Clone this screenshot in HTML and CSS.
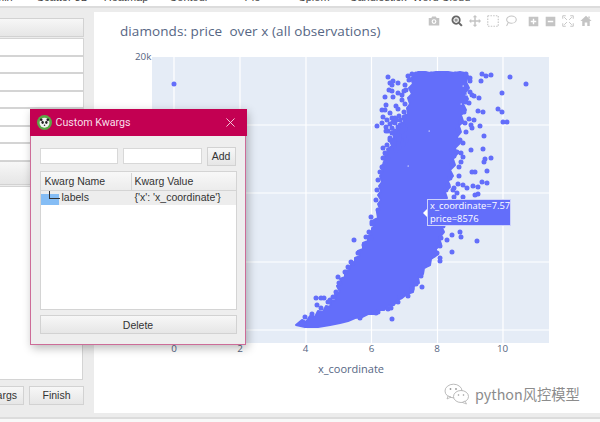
FILE: index.html
```
<!DOCTYPE html>
<html lang="en">
<head>
<meta charset="utf-8">
<title>Custom Kwargs</title>
<link rel="stylesheet" href="styles.css">
</head>
<body>
<div class="app">
  <nav class="menu">
    <span class="m1">Violin</span><span class="m2">Scatter 3D</span><span class="m3">Heatmap</span><span class="m4">Contour</span><span class="m5">Pie</span><span class="m6">Splom</span><span class="m7">Candlestick</span><span class="m8">Word Cloud</span>
  </nav>
  <main class="main">
    <aside class="side">
      <div class="btn side-top"></div>
      <div class="side-row"></div>
      <div class="side-row"></div>
      <div class="side-row"></div>
      <div class="side-row"></div>
      <div class="side-row"></div>
      <div class="side-row"></div>
      <div class="side-row"></div>
      <div class="btn side-mid"></div>
      <div class="side-panel"></div>
      <div class="side-actions">
        <div class="btn act-a">Kwargs</div>
        <div class="btn act-b">Finish</div>
      </div>
    </aside>
    <section class="plot">
      <h1 class="title">diamonds: price  over x (all observations)</h1>
      <div class="modebar">
        <svg class="mb" viewBox="0 0 16 16"><path fill="#c4c4c4" d="M1 4h3.5l1-2h5l1 2H15v10H1zM8 5.5a3.2 3.2 0 1 0 0 6.4 3.2 3.2 0 0 0 0-6.4zm0 1.6a1.6 1.6 0 1 1 0 3.2 1.6 1.6 0 0 1 0-3.2z" fill-rule="evenodd"/></svg>
        <svg class="mb mb-zoom" viewBox="0 0 16 16"><circle cx="6.8" cy="6.8" r="4.9" fill="none" stroke="#666" stroke-width="2.4"/><rect x="4.8" y="4.8" width="4" height="4" fill="#999"/><path d="M10.5 10.5l4 4" stroke="#666" stroke-width="2.8"/></svg>
        <svg class="mb mb-pan" viewBox="0 0 16 16"><path fill="#c4c4c4" d="M8 0l3 3H9v4h4V5l3 3-3 3V9H9v4h2l-3 3-3-3h2V9H3v2L0 8l3-3v2h4V3H5z"/></svg>
        <svg class="mb mb-box" viewBox="0 0 16 16"><rect x="1" y="1" width="14" height="14" fill="none" stroke="#c4c4c4" stroke-width="1.5" stroke-dasharray="2 1.6"/></svg>
        <svg class="mb mb-lasso" viewBox="0 0 16 16"><ellipse cx="8.6" cy="6.2" rx="6.4" ry="4.8" fill="none" stroke="#c4c4c4" stroke-width="1.4"/><path d="M4.4 10c-1 1.4-1 3 -2.4 4.5" fill="none" stroke="#c4c4c4" stroke-width="1.4"/></svg>
        <svg class="mb mb-plus" viewBox="0 0 16 16"><path fill="#c4c4c4" fill-rule="evenodd" d="M1 1h14v14H1zM7 4v3H4v2h3v3h2V9h3V7H9V4z"/></svg>
        <svg class="mb mb-minus" viewBox="0 0 16 16"><path fill="#c4c4c4" fill-rule="evenodd" d="M1 1h14v14H1zM4 7v2h8V7z"/></svg>
        <svg class="mb mb-auto" viewBox="0 0 16 16"><path fill="none" stroke="#c4c4c4" stroke-width="1.3" d="M1 5V1h4M11 1h4v4M15 11v4h-4M5 15H1v-4M3 3l3.5 3.5M13 3L9.500 6.500M13 13L9.500 9.500M3 13l3.500-3.500"/></svg>
        <svg class="mb mb-home" viewBox="0 0 16 16"><path fill="#c4c4c4" d="M8 1l7.500 7H13v6.500H9.700V10H6.300v4.500H3V8H.5zM11 2h2v3l-2-1.800z"/></svg>
      </div>
      <div class="chart">
        <svg class="chart-svg" viewBox="0 0 506 400" width="506" height="400">
          <rect class="bg" x="58" y="45" width="397" height="286"/>
          <path class="grid" d="M80 45V331M146 45V331M212 45V331M277.500 45V331M343.500 45V331M409 45V331M58 318H455M58 250H455M58 181H455M58 113H455"/>
          <g transform="translate(-94 -12)">
            <path class="blob" d="M296 325L302 320 306 322 310 316 315 317 318 311 323 312 326 306 330 307 331 301 336 300 335 294 340 292 337 286 342 284 340 279 345 277 345 271 349 270 351 265 355 264 355 258 360 256 358 251 363 249 363 243 368 241 368 236 372 234 372 228 375 226 374 220 378 218 377 212 380 209 378 204 381 200 378 195 381 191 379 186 382 182 380 176 383 172 381 167 385 162 383 157 388 154 387 149 392 146 390 141 394 138 393 132 398 130 399 124 404 122 403 116 408 114 407 108 410 104 408 98 412 94 409 88 413 84 411 78 415 75 418 72 425 72 430 73 436 72 442 72 448 72 454 73 460 72 465 73 468 76 466 82 469 88 465 93 468 99 463 104 466 110 461 115 463 121 459 126 461 132 457 137 460 143 455 148 457 154 453 159 455 165 450 170 453 176 448 181 450 187 445 192 447 198 443 204 442 215 441 226 444 232 439 238 441 244 436 249 437 255 431 259 430 265 424 268 423 274 418 277 419 283 414 286 413 292 407 294 402 298 397 300 394 305 388 306 384 310 378 310 374 314 368 314 362 317 355 318 348 321 340 323 330 325 318 327 305 327Z"/>
            <path class="pts" d="M408 76h0M412 74h0M416 74h0M421 74h0M426 74h0M431 74h0M437 75h0M443 74h0M449 75h0M455 74h0M461 75h0M466 74h0M470 78h0M386 127h0M390 124h0M395 123h0M400 120h0M404 118h0M392 128h0M398 127h0M403 126h0M386 131h0M392 133h0M397 134h0M402 131h0M405 129h0M390 140h0M394 143h0M399 139h0M404 136h0M406 140h0M399 147h0M403 144h0M396 150h0M388 158h0M385 163h0M409 80h0M406 90h0M405 104h0M404 112h0M399 116h0M396 120h0M380 172h0M378 180h0M377 190h0M376 200h0M378 210h0M372 222h0M369 232h0M364 245h0M358 253h0M351 262h0M345 272h0M339 283h0M336 292h0M330 300h0M321 308h0M312 314h0M464 94h0M470 92h0M466 102h0M464 112h0M461 122h0M458 130h0M460 140h0M454 156h0M452 165h0M450 178h0M446 190h0M444 200h0M443 210h0M443 226h0M441 238h0M440 246h0M434 255h0M428 264h0M421 276h0M416 284h0M408 296h0M398 302h0M388 309h0M376 313h0M360 318h0"/>
            <path class="specks" d="M429 131h.5M463 86h.5M466 95h.5M461 104h.5M444 222h.5M408 166h.5M443 241h.5"/>
          </g>
          <path class="pts" d="M80 72h0M294 65h0M299 69h0M296 71h0M298 73h0M304 71h0M311 73h0M295 78h0M298 79h0M304 81h0M310 79h0M308 83h0M291 85h0M299 85h0M308 88h0M292 93h0M288 98h0M291 98h0M302 94h0M304 97h0M296 101h0M289 105h0M298 106h0M301 106h0M293 108h0M288 111h0M283 114h0M299 110h0M294 119h0M301 119h0M296 126h0M289 136h0M293 133h0M291 141h0M289 146h0M288 155h0M388 62h0M392 64h0M397 63h0M387 69h0M416 65h0M432 72h0M408 81h0M378 83h0M380 84h0M385 86h0M376 69h0M375 91h0M384 99h0M389 100h0M404 97h0M408 100h0M409 110h0M413 110h0M375 107h0M380 108h0M371 111h0M377 113h0M378 116h0M386 114h0M372 120h0M390 124h0M369 131h0M377 138h0M389 137h0M363 140h0M367 141h0M369 145h0M391 147h0M397 146h0M390 150h0M367 150h0M365 155h0M393 159h0M378 160h0M381 160h0M365 164h0M388 170h0M393 171h0M364 172h0M369 173h0M379 174h0M384 175h0M373 176h0M360 176h0M354 173h0M359 178h0M363 181h0M369 185h0M381 183h0M384 182h0M360 185h0M366 220h0M367 225h0M383 229h0M358 223h0M353 228h0M358 240h0M346 246h0M346 249h0M343 241h0M330 254h0M328 275h0M318 277h0M313 280h0M306 285h0M298 307h0M297 296h0M284 300h0M277 205h0M278 212h0M272 225h0M277 226h0M260 228h0M258 251h0M244 265h0M222 286h0M227 286h0M230 286h0M223 293h0M211 305h0M254 255h0M239 285h0M234 290h0"/>
        </svg>
        <span class="tick y20">20k</span>
        <div class="xticks"><span class="x0">0</span><span class="x2">2</span><span class="x4">4</span><span class="x6">6</span><span class="x8">8</span><span class="x10">10</span></div>
        <div class="xlabel">x_coordinate</div>
        <div class="tooltip">x_coordinate=7.57<br>price=8576</div>
      </div>
      <div class="watermark">
        <svg class="wx" viewBox="0 0 26 22"><ellipse cx="9.500" cy="8" rx="8.500" ry="6.800" fill="#fff" stroke="#aaa" stroke-width=".8"/><path d="M4 13l-1 3 4-2z" fill="#fff" stroke="#aaa" stroke-width=".7"/><ellipse cx="17" cy="13.500" rx="7.500" ry="6" fill="#fff" stroke="#aaa" stroke-width=".8"/><path d="M21 18l1.500 3-4-1.500z" fill="#fff" stroke="#aaa" stroke-width=".7"/><circle cx="6.500" cy="6" r=".9" fill="#999"/><circle cx="12" cy="6" r=".9" fill="#999"/><circle cx="14.500" cy="12" r=".8" fill="#999"/><circle cx="19.500" cy="12" r=".8" fill="#999"/></svg>
        <span class="wm-text">python风控模型</span>
      </div>
    </section>
  </main>
  <div class="footer"></div>
</div>

<div class="dialog">
  <header class="dlg-title">
    <svg class="dlg-logo" viewBox="0 0 16 16"><circle cx="8" cy="8" r="8" fill="#5aa846"/><circle cx="8" cy="8.300" r="5.300" fill="#f4f4f4"/><circle cx="4.500" cy="5" r="1.400" fill="#222"/><circle cx="11.500" cy="5" r="1.400" fill="#222"/><ellipse cx="6" cy="8" rx="1.300" ry="1.500" fill="#222"/><ellipse cx="10" cy="8" rx="1.300" ry="1.500" fill="#222"/><circle cx="8" cy="10.800" r=".8" fill="#222"/></svg>
    <span class="dlg-name">Custom Kwargs</span>
    <svg class="dlg-close" viewBox="0 0 10 10"><path d="M.5.500l9 9M9.500.500l-9 9" stroke="#f6dce6" stroke-width="1"/></svg>
  </header>
  <div class="dlg-body">
    <div class="dlg-form">
      <div class="field"></div>
      <div class="field"></div>
      <div class="btn add">Add</div>
    </div>
    <div class="tree">
      <div class="tree-head"><span class="col1">Kwarg Name</span><span class="col2">Kwarg Value</span></div>
      <div class="tree-row">
        <span class="tree-cell1"><span class="branch"></span><span class="tree-name">labels</span></span>
        <span class="tree-cell2">{'x': 'x_coordinate'}</span>
      </div>
    </div>
    <div class="btn del">Delete</div>
  </div>
</div>
</body>
</html>
```
FILE: styles.css
```
* { box-sizing: border-box; }
html, body { margin: 0; padding: 0; }
body {
  width: 600px; height: 422px; overflow: hidden; position: relative;
  background: #fff; color: #333;
  font-family: "Liberation Sans", Arial, sans-serif;
}
.app { width: 600px; height: 422px; display: flex; flex-direction: column; }

.menu {
  height: 6px; flex: none; overflow: hidden; background: #fff;
  display: flex; align-items: flex-end; font-size: 11px; color: #444; white-space: nowrap;
  padding-bottom: 2px; line-height: 14px;
}
.m1 { margin-left: -14px; }
.m2 { margin-left: 24px; }
.m3 { margin-left: 15px; }
.m4 { margin-left: 21px; }
.m5 { margin-left: 36px; }
.m6 { margin-left: 38px; }
.m7 { margin-left: 20px; }
.m8 { margin-left: 6px; }

.main {
  flex: none; height: 411px; background: #ececec; border-top: 2px solid #dcdcdc;
  display: flex; gap: 10px; padding: 4px 0 4px 0;
}
.side { width: 84px; flex: none; display: flex; flex-direction: column; padding-top: 6px; }
.btn {
  background: linear-gradient(#f7f7f7, #e6e6e6);
  border: 1px solid #d2d2d2; font-size: 10.500px; color: #333;
  display: flex; align-items: center; justify-content: center;
}
.side-top { height: 19px; border-left: 0; }
.side-row { height: 17.500px; background: #fff; border: 1px solid #d4d4d4; border-left: 0; }
.side-top + .side-row { margin-top: 1px; }
.side-mid { height: 24px; border-left: 0; }
.side-panel { height: 194px; margin-top: 1px; background: #fff; border: 1px solid #d4d4d4; border-left: 0; width: 83px; }
.side-actions { display: flex; gap: 5px; margin-top: 6px; height: 19px; }
.act-a { width: 24px; border-left: 0; justify-content: flex-end; overflow: hidden; padding-right: 6px; white-space: nowrap; }
.act-b { width: 55px; }

.plot { position: relative; width: 506px; height: 401px; background: #fff; flex: none; }
.title {
  position: absolute; left: 26px; top: 10px; margin: 0; font: 400 13.500px/18px "Open Sans", sans-serif;
  color: #566684; white-space: pre; letter-spacing: .08px;
}
.modebar { position: absolute; left: 334px; top: 3px; display: flex; align-items: center; height: 12px; }
.mb { width: 12px; height: 12px; flex: none; }
.mb-zoom { margin-left: 11px; }
.mb-pan { margin-left: 6px; }
.mb-box { margin-left: 6px; }
.mb-lasso { margin-left: 6px; }
.mb-plus { margin-left: 11px; width: 11px; height: 11px; }
.mb-minus { margin-left: 6px; width: 11px; height: 11px; }
.mb-auto { margin-left: 6px; }
.mb-home { margin-left: 6px; }

.chart { position: absolute; inset: 0; }
.chart-svg { display: block; }
.bg { fill: #e5ecf6; }
.grid { stroke: #fff; stroke-width: 1.200; fill: none; }
.blob { fill: #636efa; stroke: #636efa; stroke-width: 2; stroke-linejoin: round; }
.pts { fill: none; stroke: #636efa; stroke-width: 5; stroke-linecap: round; }
.specks { fill: none; stroke: #dfe4fb; stroke-width: 1.200; stroke-linecap: round; }
.tick, .xticks { font: 400 9.800px/12px "Open Sans", sans-serif; color: #56647f; }
.tick { position: absolute; }
.y20 { left: 41px; top: 39px; }
.xticks { position: absolute; left: 0; top: 331px; width: 506px; height: 12px; }
.xticks span { position: absolute; transform: translateX(-50%); }
.x0 { left: 80px; } .x2 { left: 146px; } .x4 { left: 211.500px; } .x6 { left: 277.500px; } .x8 { left: 343px; } .x10 { left: 408.500px; }
.xlabel {
  position: absolute; left: 224px; top: 350px; font: 400 11px/14px "Open Sans", sans-serif; color: #566684;
}
.tooltip {
  position: absolute; left: 333px; top: 187px; width: 84px; height: 27px; background: #636efa;
  border: 1px solid #cdd2fb; color: #fff; font: 400 9.400px/12.500px "Open Sans", sans-serif; padding: 0 0 0 2px; white-space: nowrap;
}
.tooltip::before {
  content: ""; position: absolute; left: -5px; top: 9px; width: 0; height: 0;
  border: 4px solid transparent; border-left: 0; border-right: 4px solid #fff; 
}
.watermark { position: absolute; left: 350px; top: 369px; display: flex; align-items: center; gap: 5px; height: 26px; }
.wx { width: 26px; height: 22px; flex: none; }
.wm-text { font: 400 14.300px/20px "Noto Sans CJK SC", "Noto Sans", sans-serif; color: #8c8c8c; white-space: nowrap; }

.footer { flex: 1; border-top: 2px solid #dcdcdc; background: #f8f8f8; }

.dialog {
  position: absolute; left: 30px; top: 109px; width: 216px; height: 236px;
  border: 1.500px solid #cd6c98; border-top: 0; background: #eee;
  box-shadow: 2px 3px 9px rgba(0,0,0,.28);
}
.dlg-title {
  height: 27px; margin: 0 -1.500px; background: #c30052; color: #f8dfe9;
  display: flex; align-items: center; padding: 0 12px 0 7px; font: 400 10.700px "Roboto", sans-serif;
}
.dlg-logo { width: 15px; height: 15px; flex: none; }
.dlg-name { margin-left: 4px; flex: 1; }
.dlg-close { width: 9px; height: 9px; flex: none; }
.dlg-body { padding: 10px 8.500px 0; display: flex; flex-direction: column; }
.dlg-form { display: flex; align-items: center; gap: 5px; height: 20px; }
.field { width: 78px; height: 16px; background: #fff; border: 1px solid #d8d8d8; }
.field + .field { width: 79px; }
.add { width: 29px; height: 19px; }
.tree { margin-top: 5px; height: 139px; background: #fff; border: 1px solid #d4d4d4; font-size: 10.500px; color: #333; }
.tree-head { height: 19px; display: flex; background: linear-gradient(#f8f8f8, #ececec); border-bottom: 1px solid #d4d4d4; align-items: center; }
.col1 { width: 91px; padding-left: 4px; border-right: 1px solid #d4d4d4; line-height: 17px; }
.col2 { padding-left: 3px; }
.tree-row { height: 14px; display: flex; background: #ededed; align-items: flex-start; line-height: 12px; }
.tree-cell1 { width: 91px; display: flex; align-items: flex-start; height: 14px; }
.branch { width: 18px; height: 14px; background: linear-gradient(#ededed 3px, #85bdf5 3px); position: relative; flex: none; }
.branch::before {
  content: ""; position: absolute; left: 8px; top: 0; width: 10px; height: 7px;
  border-left: 1px solid #333; border-bottom: 1px solid #333;
}
.tree-name { margin-left: 3px; }
.tree-cell2 { padding-left: 3px; white-space: nowrap; }
.del { margin-top: 5px; height: 19px; }
```
